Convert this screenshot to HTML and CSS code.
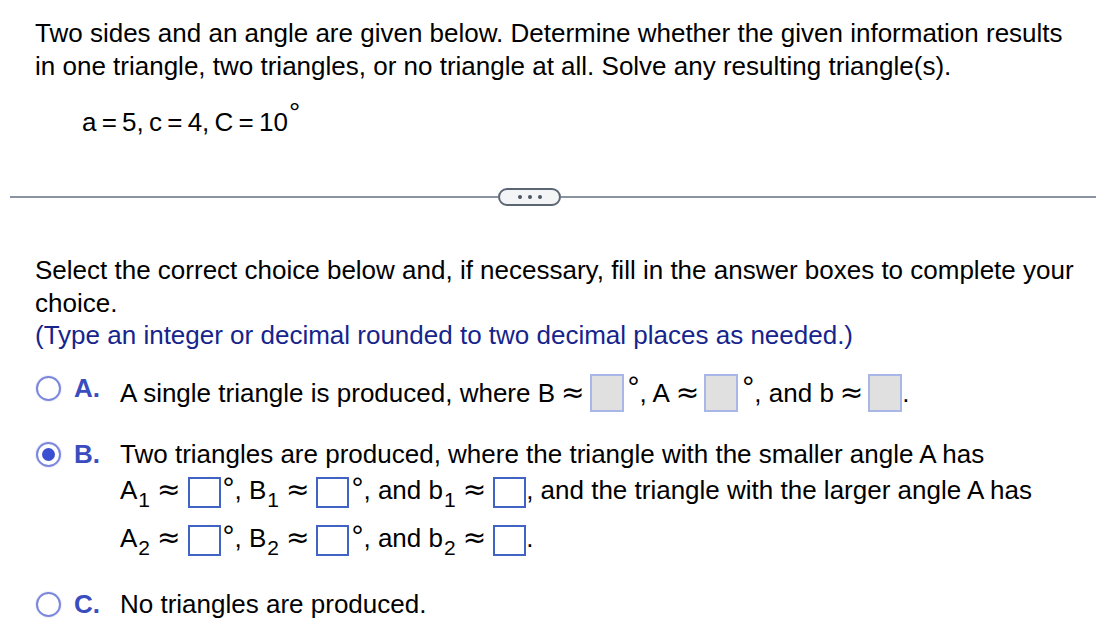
FILE: index.html
```html
<!DOCTYPE html>
<html>
<head>
<meta charset="utf-8">
<link rel="stylesheet" href="styles.css">
</head>
<body>
<div class="page">
  <p class="question">Two sides and an angle are given below. Determine whether the given information results<br>in one triangle, two triangles, or no triangle at all. Solve any resulting triangle(s).</p>
  <p class="given">a = 5, c = 4, C = 10<span class="deg">°</span></p>
  <div class="divider">
    <span class="rule rule-left"></span>
    <span class="pill"><i></i><i></i><i></i></span>
    <span class="rule rule-right"></span>
  </div>
  <p class="instr">Select the correct choice below and, if necessary, fill in the answer boxes to complete your choice.</p>
  <p class="hint">(Type an integer or decimal rounded to two decimal places as needed.)</p>

  <div class="choice choice-a">
    <span class="radio"></span>
    <span class="letter">A.</span>
    <div class="body">
      <div class="line">A single triangle is produced, where B<span class="ap">≈</span><span class="box disabled"></span><span class="dg">°</span>, A<span class="ap">≈</span><span class="box disabled"></span><span class="dg">°</span>, and b<span class="ap">≈</span><span class="box disabled"></span>.</div>
    </div>
  </div>

  <div class="choice choice-b">
    <span class="radio checked"></span>
    <span class="letter">B.</span>
    <div class="body">
      <div class="line">Two triangles are produced, where the triangle with the smaller angle A has</div>
      <div class="line line-sub">A<sub>1</sub><span class="ap">≈</span><span class="box"></span><span class="dg">°</span>, B<sub>1</sub><span class="ap">≈</span><span class="box"></span><span class="dg">°</span>, and b<sub>1</sub><span class="ap">≈</span><span class="box"></span>, and the triangle with the larger angle A has</div>
      <div class="line line-sub">A<sub>2</sub><span class="ap">≈</span><span class="box"></span><span class="dg">°</span>, B<sub>2</sub><span class="ap">≈</span><span class="box"></span><span class="dg">°</span>, and b<sub>2</sub><span class="ap">≈</span><span class="box"></span>.</div>
    </div>
  </div>

  <div class="choice choice-c">
    <span class="radio"></span>
    <span class="letter">C.</span>
    <div class="body">
      <div class="line">No triangles are produced.</div>
    </div>
  </div>
</div>
</body>
</html>
```

FILE: styles.css
```css
html, body {
  margin: 0;
  padding: 0;
  background: #ffffff;
}

body {
  font-family: "Liberation Sans", Arial, sans-serif;
  font-size: 26px;
  color: #000;
}

.page {
  padding: 17px 0 0 0;
}

p {
  margin: 0;
}

.question {
  padding-left: 35px;
  line-height: 33px;
}

.given {
  padding-left: 82px;
  margin-top: 22px;
  line-height: 33px;
  word-spacing: -2px;
}

.deg {
  position: relative;
  top: -9px;
  font-size: 28px;
  margin-left: 1px;
}

.divider {
  display: flex;
  align-items: center;
  margin: 49px 20px 0 10px;
  height: 18px;
}

.rule {
  height: 2px;
  background: #8a93a1;
}

.rule-left {
  flex: 0 0 488px;
}

.rule-right {
  flex: 1;
}

.pill {
  box-sizing: border-box;
  width: 63px;
  height: 18px;
  border: 2px solid #5b6574;
  border-radius: 9px;
  background: #f3f4f6;
  display: flex;
  align-items: center;
  justify-content: center;
  gap: 6px;
}

.pill i {
  width: 4px;
  height: 4px;
  border-radius: 50%;
  background: #4b5563;
}

.instr {
  padding-left: 35px;
  padding-right: 30px;
  margin-top: 48px;
  line-height: 32.5px;
}

.hint {
  padding-left: 35px;
  color: #16248c;
  line-height: 32px;
}

.choice {
  display: flex;
  align-items: flex-start;
  padding-left: 36px;
}

.choice-a {
  margin-top: 18px;
}

.choice-a .body {
  padding-top: 5px;
}

.choice-b {
  margin-top: 25px;
}

.choice-c {
  margin-top: 30px;
}

.radio {
  box-sizing: border-box;
  flex: 0 0 auto;
  width: 25px;
  height: 25px;
  margin-top: 5px;
  border-radius: 50%;
  border: 2.5px solid #7b86dc;
  box-shadow: 0 0 1.5px #aab2ee;
  display: flex;
  align-items: center;
  justify-content: center;
}

.choice-a .radio {
  margin-top: 7px;
}

.radio.checked::after {
  content: "";
  width: 13px;
  height: 13px;
  border-radius: 50%;
  background: #3b4fd2;
}

.letter {
  flex: 0 0 auto;
  width: 46px;
  margin-left: 13px;
  font-weight: bold;
  color: #3a4dbe;
  line-height: 34px;
}

.choice-a .letter {
  line-height: 38px;
}

.body {
  flex: 1;
}

.line {
  line-height: 34px;
  white-space: nowrap;
}

.choice-a .line {
  line-height: 38px;
}

.line-sub {
  line-height: 38px;
}

.line-sub + .line-sub {
  margin-top: 10px;
}

.ap {
  font-family: "DejaVu Sans", sans-serif;
  font-size: 28px;
  line-height: 0;
  margin: 0 7px 0 7px;
}

.choice-a .ap {
  margin: 0 5px 0 6px;
}

.box {
  display: inline-block;
  box-sizing: border-box;
  width: 33px;
  height: 31px;
  border: 2px solid #3f64c4;
  background: #fff;
  vertical-align: -9px;
}

.box.disabled {
  width: 34px;
  height: 38px;
  border-color: #a8b7e8;
  background: #e0e0e0;
  vertical-align: -10px;
}

.dg {
  position: relative;
  top: -1px;
  font-size: 30px;
  line-height: 0;
  margin: 0 0 0 2px;
}

.choice-a .dg {
  top: -5px;
  margin-left: 4px;
}

sub {
  font-size: 21px;
  vertical-align: -8px;
  line-height: 0;
  margin-left: 1px;
}
```
